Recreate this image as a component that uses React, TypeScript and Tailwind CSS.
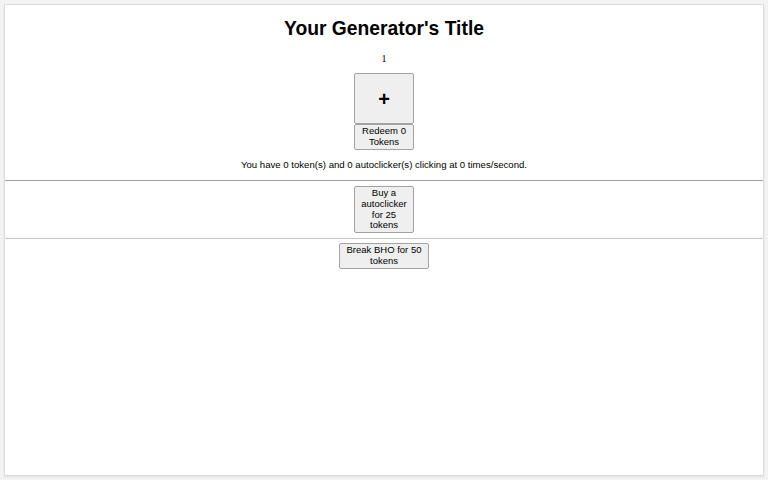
export default function App() {
  const btn =
    "bg-[#efefef] border border-[#a3a3a3] rounded-[2px] text-[9.5px] leading-[10.7px] text-black px-[4px] py-[1px] font-['Liberation_Sans',Arial,sans-serif]";
  return (
    <div className="w-[768px] h-[480px] bg-[#f3f3f3] p-[4px] font-['Liberation_Sans',Arial,sans-serif]">
      <div className="h-[472px] bg-white border border-[#dcdcdc] shadow-[0_1px_2px_rgba(0,0,0,0.08)] flex flex-col items-center">
        <h1 className="mt-[13px] text-[19.3px] leading-[22px] font-bold text-black">Your Generator's Title</h1>
        <div className="mt-[13px] text-[10px] leading-[11px] font-['Liberation_Serif',serif] text-black">1</div>
        <button className="mt-[9px] w-[60px] h-[51px] bg-[#efefef] border border-[#a3a3a3] rounded-[2px] text-[20px] font-bold text-black flex items-center justify-center">
          +
        </button>
        <button className={`${btn} w-[60px] h-[26px]`}>Redeem 0 Tokens</button>
        <p className="mt-[9px] text-[9.6px] leading-[11px] text-black">
          You have 0 token(s) and 0 autoclicker(s) clicking at 0 times/second.
        </p>
        <hr className="mt-[10px] w-full border-t border-[#a0a0a0]" />
        <button className={`${btn} mt-[5px] w-[60px] h-[47px]`}>Buy a autoclicker for 25 tokens</button>
        <hr className="mt-[5px] w-full border-t border-[#c8c8c8]" />
        <button className={`${btn} mt-[4px] w-[90px] h-[26px]`}>Break BHO for 50 tokens</button>
      </div>
    </div>
  );
}
